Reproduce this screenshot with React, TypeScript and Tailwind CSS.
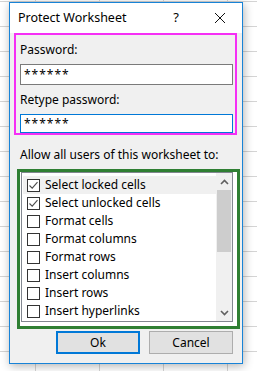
import { useState } from 'react';

const permissions = [
  { label: 'Select locked cells', checked: true },
  { label: 'Select unlocked cells', checked: true },
  { label: 'Format cells', checked: false },
  { label: 'Format columns', checked: false },
  { label: 'Format rows', checked: false },
  { label: 'Insert columns', checked: false },
  { label: 'Insert rows', checked: false },
  { label: 'Insert hyperlinks', checked: false },
];

function CheckBox({ checked }: { checked: boolean }) {
  return (
    <span className="w-[13px] h-[13px] shrink-0 border border-[#333333] bg-white flex items-center justify-center">
      {checked && (
        <svg width="11" height="11" viewBox="0 0 11 11" fill="none">
          <path d="M1.5 5.5 L4.2 8.2 L9.5 2.2" stroke="#4d4d4d" strokeWidth="1.1" />
        </svg>
      )}
    </span>
  );
}

export default function App() {
  const [items, setItems] = useState(permissions);

  const toggle = (i: number) =>
    setItems(items.map((it, j) => (j === i ? { ...it, checked: !it.checked } : it)));

  return (
    <div className="relative w-[257px] h-[371px] overflow-hidden bg-white bg-[linear-gradient(to_right,#d4d4d4_1px,transparent_1px),linear-gradient(to_bottom,#d4d4d4_1px,transparent_1px)] bg-[size:64px_25px] bg-[position:35px_1px] font-['Noto_Sans',sans-serif] text-[12px] text-black">
      {/* dialog window */}
      <div className="absolute left-[9px] top-[2px] w-[234px] h-[362px] border border-[#1883d7] bg-[#f0f0f0] shadow-[1px_2px_9px_rgba(0,0,0,0.3)] flex flex-col">
        <div className="h-[30px] bg-white flex items-center shrink-0">
          <span className="pl-[8px] text-[12.5px] flex-1">Protect Worksheet</span>
          <span className="w-[16px] text-center text-[13px] mr-[30px]">?</span>
          <svg width="12" height="12" viewBox="0 0 12 12" className="mr-[16px]">
            <path d="M1 1 L11 11 M11 1 L1 11" stroke="#111" strokeWidth="1" />
          </svg>
        </div>

        {/* password fields */}
        <div className="ml-[4px] w-[223px] border-2 border-[#f52ff5] pl-[4px] pr-[2px] flex flex-col">
          <div className="h-[29px] flex items-center">Password:</div>
          <div className="h-[21px] border border-[#7a7a7a] bg-white flex items-center pl-[3px] text-[12px] tracking-[1px]">
            ******
          </div>
          <div className="h-[29px] flex items-center">Retype password:</div>
          <div className="h-[19px] border border-[#0078d7] bg-white flex items-center pl-[3px] text-[12px] tracking-[1px]">
            ******
          </div>
        </div>

        <div className="h-[34px] pt-[6px] pl-[10px] flex items-center">
          Allow all users of this worksheet to:
        </div>

        {/* permissions list */}
        <div className="ml-[7px] w-[223px] h-[160px] border-[3px] border-[#2f7f33] bg-white pl-[1px] pr-[4px] pb-[4px] flex">
          <div className="flex-1 border border-[#828790] bg-white flex">
            <div className="flex-1 pt-[3px] pl-[1px] flex flex-col">
              {items.map((it, i) => (
                <div
                  key={it.label}
                  onClick={() => toggle(i)}
                  className={`h-[18px] flex items-center gap-[5px] pl-[4px] ${i === 0 ? 'bg-[#f0f0f0]' : ''}`}
                >
                  <CheckBox checked={it.checked} />
                  <span>{it.label}</span>
                </div>
              ))}
            </div>
            <div className="w-[16px] bg-[#f0f0f0] flex flex-col items-center">
              <div className="h-[17px] flex items-center justify-center">
                <svg width="9" height="6" viewBox="0 0 9 6">
                  <path d="M1 5 L4.5 1.5 L8 5" stroke="#606060" strokeWidth="1.6" fill="none" />
                </svg>
              </div>
              <div className="w-[14px] h-[62px] bg-[#cdcdcd]" />
              <div className="flex-1" />
              <div className="h-[17px] flex items-center justify-center">
                <svg width="9" height="6" viewBox="0 0 9 6">
                  <path d="M1 1 L4.5 4.5 L8 1" stroke="#606060" strokeWidth="1.6" fill="none" />
                </svg>
              </div>
            </div>
          </div>
        </div>

        {/* buttons */}
        <div className="mt-[2px] pr-[9px] flex justify-end gap-[9px]">
          <button className="w-[84px] h-[23px] border-2 border-[#0078d7] bg-[#e1e1e1] text-[12px]">Ok</button>
          <button className="w-[84px] h-[23px] border border-[#adadad] bg-[#e1e1e1] text-[12px]">Cancel</button>
        </div>
      </div>
    </div>
  );
}
